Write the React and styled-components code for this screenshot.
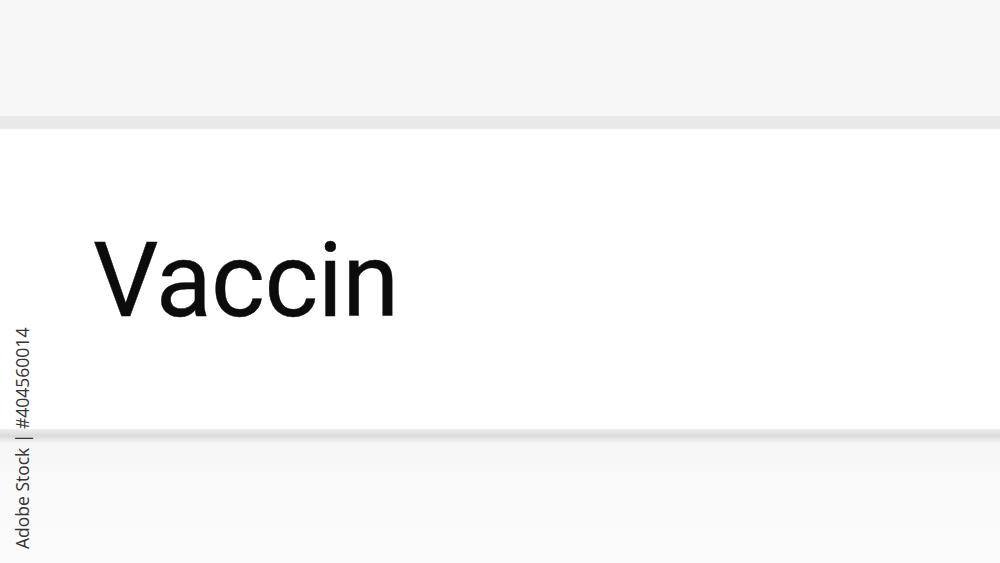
import React from "react";
import styled, { createGlobalStyle } from "styled-components";

const Global = createGlobalStyle`
  html, body { margin: 0; padding: 0; width: 1000px; height: 563px; overflow: hidden; background: #f8f8f8; }
  #root { width: 1000px; height: 563px; }
`;

const Page = styled.div`
  position: relative;
  width: 1000px;
  height: 563px;
  display: flex;
  flex-direction: column;
  background: #f9f9f9;
  font-family: Roboto, "Noto Sans", sans-serif;
`;

const TopBar = styled.div`
  height: 116px;
  flex: none;
  background: #f7f7f7;
`;

const Band = styled.div`
  height: 13px;
  flex: none;
  background: #e9e9e9;
`;

const SearchField = styled.div`
  height: 300px;
  flex: none;
  background: #ffffff;
  display: flex;
  align-items: center;
  padding-left: 93px;
  box-sizing: border-box;
`;

const Query = styled.span`
  font-size: 103px;
  font-weight: 400;
  color: #0c0c0c;
  letter-spacing: -0.6px;
  line-height: 1;
  margin-top: 2px;
  -webkit-text-stroke: 0.4px #0c0c0c;
`;

const Shadow = styled.div`
  height: 14px;
  flex: none;
  background: linear-gradient(#f0f0f0 0%, #e2e2e2 30%, #dcdcdc 50%, #e6e6e6 70%, #f6f6f6 100%);
`;

const Bottom = styled.div`
  flex: 1;
  background: linear-gradient(#f6f6f6, #fafafa 40%, #fbfbfb);
`;

const Watermark = styled.div`
  position: absolute;
  left: 11px;
  top: 549px;
  transform: rotate(-90deg);
  transform-origin: 0 0;
  white-space: nowrap;
  font-family: "Open Sans", "Noto Sans", sans-serif;
  font-size: 17.5px;
  font-weight: 500;
  color: #333333;
  line-height: 22px;
`;

export default function App() {
  return (
    <>
      <Global />
      <Page>
        <TopBar />
        <Band />
        <SearchField>
          <Query>Vaccin</Query>
        </SearchField>
        <Shadow />
        <Bottom />
        <Watermark>Adobe Stock | #404560014</Watermark>
      </Page>
    </>
  );
}
